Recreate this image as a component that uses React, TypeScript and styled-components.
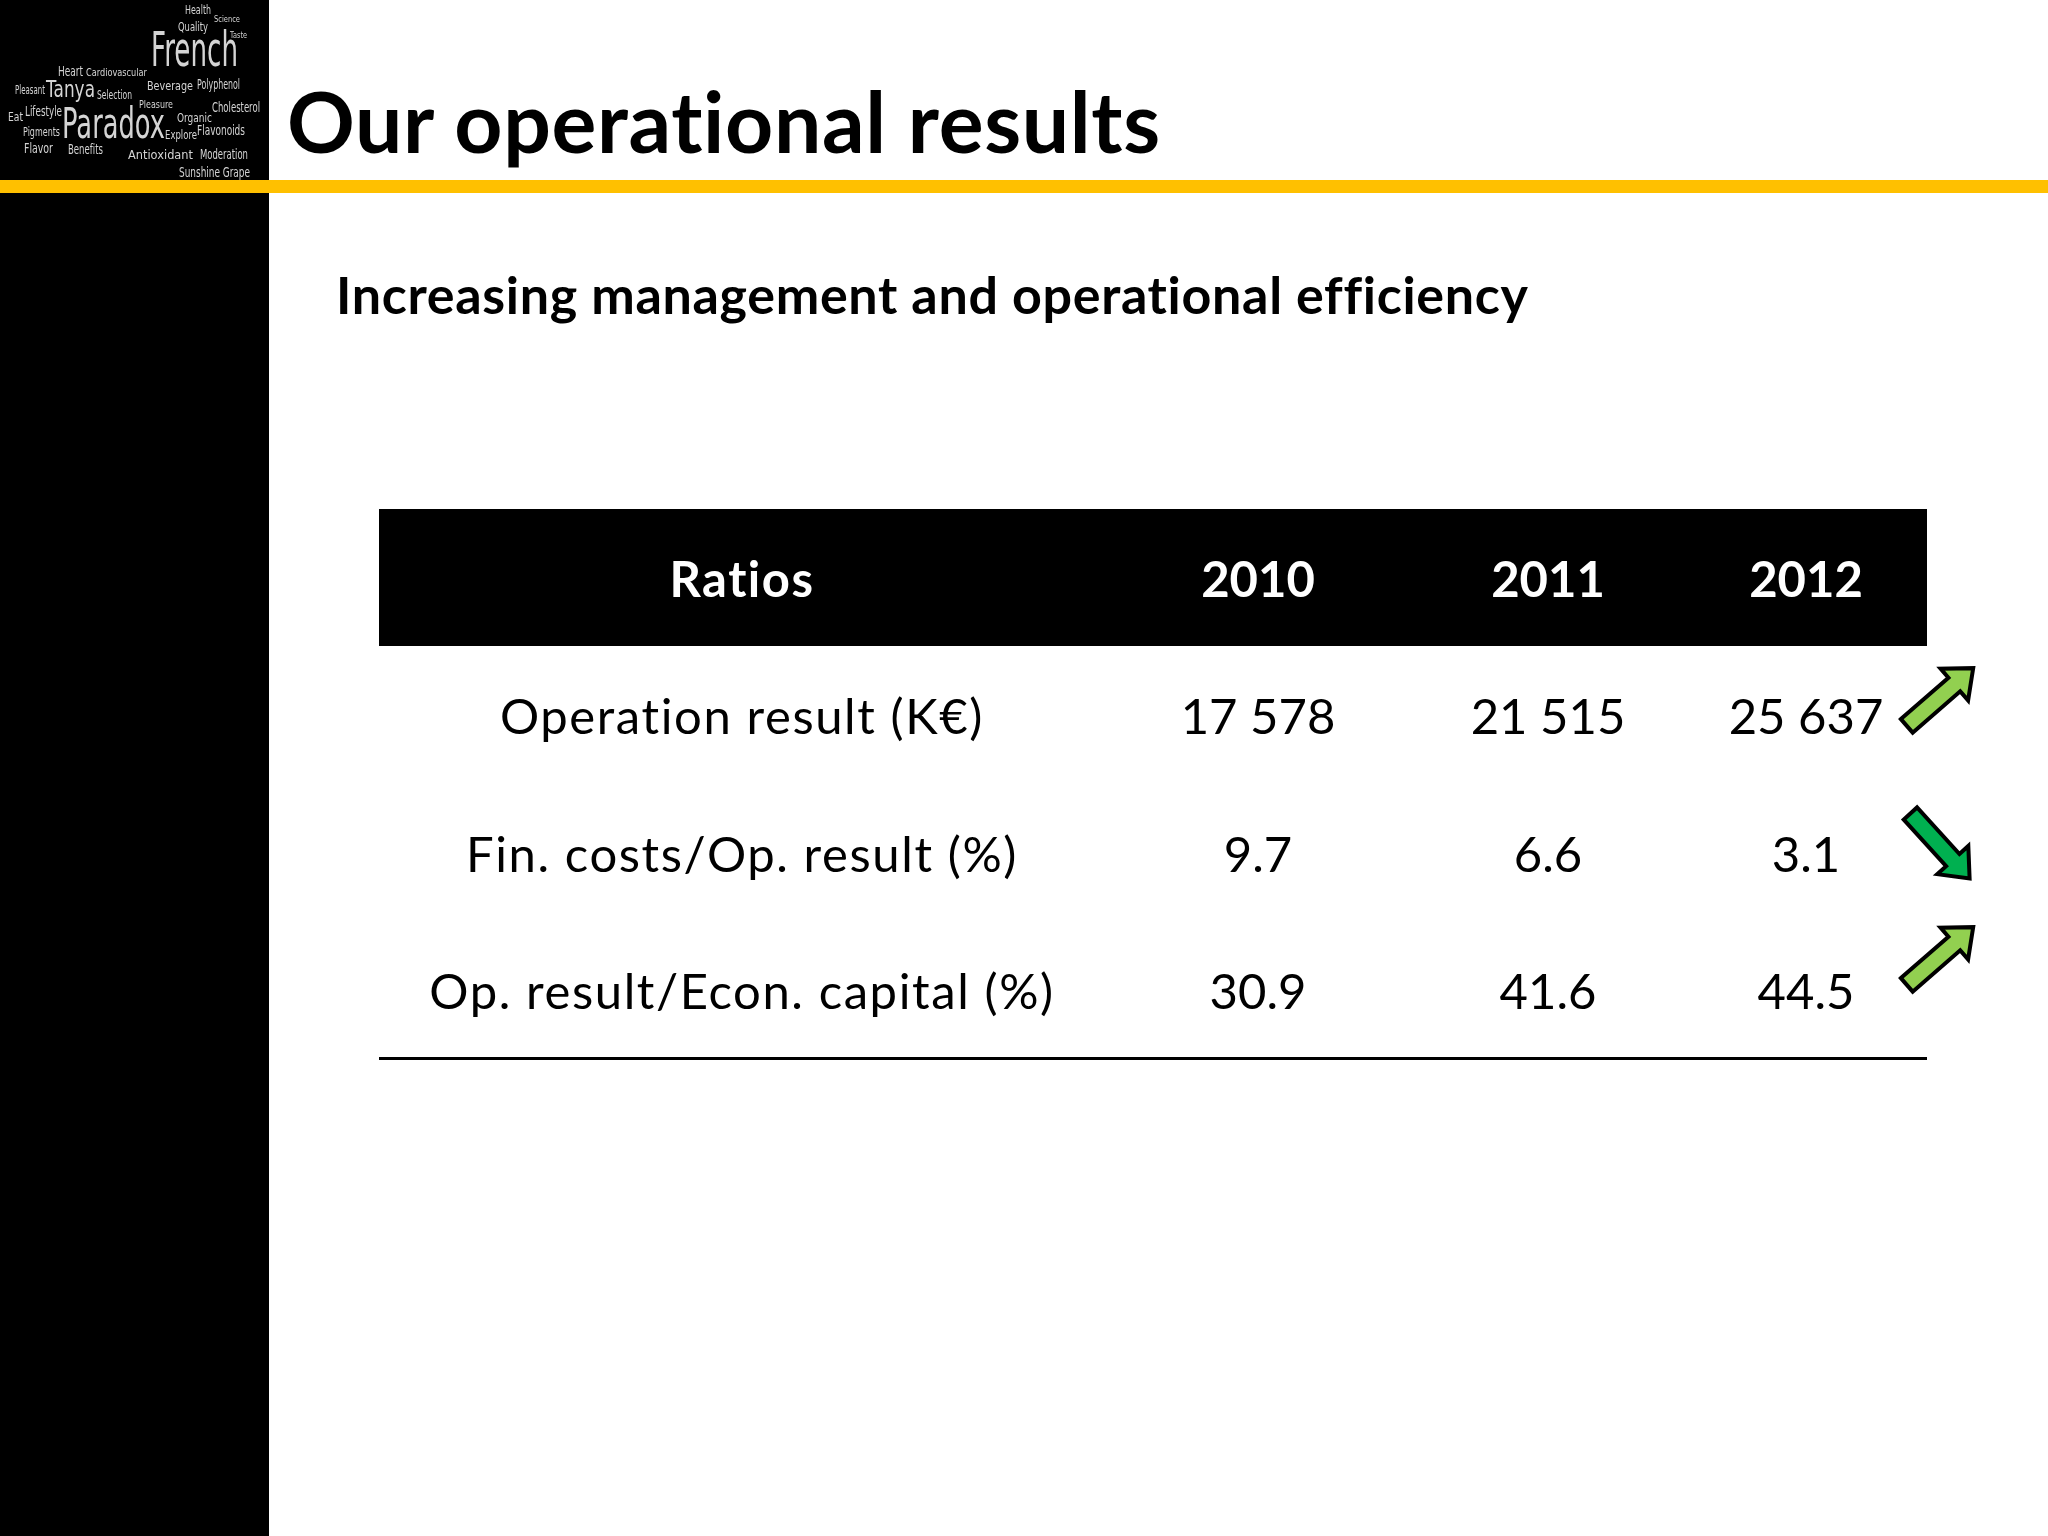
import React from "react";
import styled, { createGlobalStyle } from "styled-components";

const GlobalStyle = createGlobalStyle`
  html, body {
    margin: 0;
    padding: 0;
    background: #fff;
  }
  body {
    width: 2048px;
    height: 1536px;
    overflow: hidden;
    font-family: Lato, "Open Sans", sans-serif;
    color: #000;
  }
`;

const words: [string, number, number, number, number][] = [
  // text, left, top, right, bottom
  ["Health", 185, 4, 211, 14],
  ["Science", 214, 14, 240, 22],
  ["Quality", 178, 20, 208, 31],
  ["Taste", 230, 31, 247, 38],
  ["French", 151, 25, 238, 66],
  ["Heart", 58, 64, 83, 76],
  ["Cardiovascular", 86, 67, 147, 76],
  ["Pleasant", 15, 83, 45, 94],
  ["Tanya", 46, 77, 95, 97],
  ["Selection", 97, 89, 132, 99],
  ["Beverage", 147, 79, 193, 90],
  ["Polyphenol", 197, 76, 240, 89],
  ["Pleasure", 139, 99, 173, 108],
  ["Cholesterol", 212, 100, 260, 112],
  ["Eat", 8, 111, 23, 121],
  ["Lifestyle", 25, 104, 62, 116],
  ["Paradox", 62, 101, 165, 138],
  ["Organic", 177, 112, 212, 122],
  ["Pigments", 23, 125, 60, 136],
  ["Explore", 165, 129, 197, 139],
  ["Flavonoids", 197, 122, 245, 135],
  ["Flavor", 24, 141, 53, 153],
  ["Benefits", 68, 141, 103, 154],
  ["Antioxidant", 128, 148, 193, 159],
  ["Moderation", 200, 147, 248, 159],
  ["Sunshine Grape", 179, 165, 250, 177],
];

const rows = [
  { label: "Operation result (K€)", values: ["17 578", "21 515", "25 637"], trend: "up", top: 3 },
  { label: "Fin. costs/Op. result (%)", values: ["9.7", "6.6", "3.1"], trend: "down", top: 14 },
  { label: "Op. result/Econ. capital (%)", values: ["30.9", "41.6", "44.5"], trend: "up", top: -14 },
];

function Logo() {
  return (
    <LogoBox>
      <svg width="269" height="180" viewBox="0 0 269 180">
        <rect width="269" height="180" fill="#000" />
        {words.map(([t, l, tp, r, b]) => (
          <text
            key={t}
            x={l}
            y={b}
            fontSize={(b - tp) * 1.15}
            textLength={r - l}
            lengthAdjust="spacingAndGlyphs"
            fill="#d4d4d4"
            fontFamily="'DejaVu Sans', sans-serif"
          >
            {t}
          </text>
        ))}
      </svg>
    </LogoBox>
  );
}

function TrendArrow({ dir }: { dir: string }) {
  const up = dir === "up";
  return (
    <svg width="96" height="96" viewBox="-48 -48 96 96">
      <path
        d="M-44,-9 L19,-9 L19,-21 L44,0 L19,21 L19,9 L-44,9 Z"
        transform={`rotate(${up ? -41 : 47.7})`}
        fill={up ? "#92d050" : "#00b050"}
        stroke="#000"
        strokeWidth="4"
        strokeLinejoin="miter"
      />
    </svg>
  );
}

export default function App() {
  return (
    <Slide>
      <GlobalStyle />
      <Header>
        <Logo />
        <TitleArea>
          <Title>Our operational results</Title>
        </TitleArea>
      </Header>
      <YellowBar />
      <Main>
        <Sidebar />
        <Content>
          <Subtitle>Increasing management and operational efficiency</Subtitle>
          <Table>
            <HeadRow>
              <HeadCell $wide>Ratios</HeadCell>
              <HeadCell>2010</HeadCell>
              <HeadCell>2011</HeadCell>
              <HeadCell>2012</HeadCell>
            </HeadRow>
            {rows.map((row, i) => (
              <BodyRow key={row.label} $last={i === rows.length - 1}>
                <Cell $wide>{row.label}</Cell>
                {row.values.map((v) => (
                  <Cell key={v}>{v}</Cell>
                ))}
                <ArrowSpot $top={row.top}>
                  <TrendArrow dir={row.trend} />
                </ArrowSpot>
              </BodyRow>
            ))}
          </Table>
        </Content>
      </Main>
    </Slide>
  );
}

const Slide = styled.div`
  width: 2048px;
  height: 1536px;
  display: flex;
  flex-direction: column;
  background: #fff;
  font-variant-ligatures: none;
`;

const Header = styled.header`
  display: flex;
  height: 180px;
`;

const LogoBox = styled.div`
  width: 269px;
  height: 180px;
  background: #000;
  svg {
    display: block;
    filter: blur(0.5px);
  }
`;

const TitleArea = styled.div`
  flex: 1;
  padding: 71px 0 0 18px;
`;

const Title = styled.h1`
  margin: 0;
  font-family: Lato, sans-serif;
  font-weight: 700;
  font-size: 84px;
  line-height: 100px;
  letter-spacing: 0.65px;
`;

const YellowBar = styled.div`
  height: 13px;
  background: #ffc000;
`;

const Main = styled.div`
  flex: 1;
  display: flex;
`;

const Sidebar = styled.aside`
  width: 269px;
  background: #000;
`;

const Content = styled.section`
  flex: 1;
  padding: 71px 0 0 67px;
`;

const Subtitle = styled.h2`
  margin: 0;
  font-family: Lato, sans-serif;
  font-weight: 700;
  font-size: 52px;
  line-height: 60px;
  letter-spacing: 0.68px;
`;

const Table = styled.div`
  margin: 185px 0 0 43px;
  width: 1548px;
`;

const HeadRow = styled.div`
  display: grid;
  grid-template-columns: 726px 306px 274px 242px;
  height: 137px;
  background: #000;
  color: #fff;
`;

const HeadCell = styled.div<{ $wide?: boolean }>`
  display: flex;
  align-items: center;
  justify-content: center;
  font-family: Lato, sans-serif;
  font-weight: 700;
  font-size: 49px;
  letter-spacing: ${(p) => (p.$wide ? "1.5px" : "0")};
`;

const BodyRow = styled.div<{ $last?: boolean }>`
  position: relative;
  display: grid;
  grid-template-columns: 726px 306px 274px 242px;
  height: 138px;
  border-bottom: ${(p) => (p.$last ? "3px solid #000" : "none")};
  box-sizing: border-box;
`;

const Cell = styled.div<{ $wide?: boolean }>`
  display: flex;
  align-items: center;
  justify-content: center;
  font-family: Lato, sans-serif;
  font-weight: 400;
  font-size: 49px;
  letter-spacing: ${(p) => (p.$wide ? "1.6px" : "0")};
`;

const ArrowSpot = styled.div<{ $top: number }>`
  position: absolute;
  left: calc(100% - 35px);
  top: ${(p) => p.$top}px;
  width: 96px;
  height: 96px;
  svg {
    display: block;
  }
`;
